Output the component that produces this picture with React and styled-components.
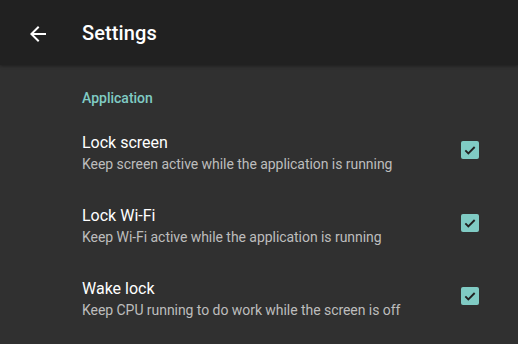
import styled, { createGlobalStyle } from 'styled-components';

const Global = createGlobalStyle`
  html, body { margin: 0; padding: 0; background: #303030; }
  body { font-family: Roboto, "Noto Sans", sans-serif; }
`;

const Page = styled.div`
  width: 518px;
  height: 344px;
  background: #303030;
  display: flex;
  flex-direction: column;
  overflow: hidden;
`;

const Toolbar = styled.div`
  height: 65px;
  flex-shrink: 0;
  background: #212121;
  display: flex;
  align-items: center;
  box-shadow: 0 1px 3px rgba(0, 0, 0, 0.4);
`;

const BackButton = styled.div`
  width: 82px;
  display: flex;
  align-items: center;
  padding-left: 26px;
  margin-top: 2px;
  box-sizing: border-box;
`;

const Title = styled.div`
  color: #fff;
  font-size: 20px;
  font-weight: 500;
  letter-spacing: 0.1px;
`;

const Category = styled.div`
  padding: 23px 0 8px 82px;
  line-height: 20px;
  font-size: 14px;
  font-weight: 500;
  color: #80cbc4;
`;

const Row = styled.div`
  display: flex;
  align-items: center;
  height: 73px;
  padding: 0 39px 0 82px;
`;

const Texts = styled.div`
  flex: 1;
  display: flex;
  flex-direction: column;
`;

const ItemTitle = styled.div`
  font-size: 16px;
  line-height: 22px;
  color: #fff;
`;

const ItemSummary = styled.div`
  font-size: 14px;
  line-height: 20px;
  color: #bdbdbd;
  letter-spacing: -0.05px;
`;

const Check = styled.div`
  width: 18px;
  height: 18px;
  margin-bottom: 6px;
  border-radius: 2px;
  background: #80cbc4;
  display: flex;
  align-items: center;
  justify-content: center;
`;

const items = [
  ['Lock screen', 'Keep screen active while the application is running'],
  ['Lock Wi-Fi', 'Keep Wi-Fi active while the application is running'],
  ['Wake lock', 'Keep CPU running to do work while the screen is off'],
];

export default function App() {
  return (
    <Page>
      <Global />
      <Toolbar>
        <BackButton>
          <svg width="24" height="24" viewBox="0 0 24 24">
            <path d="M20 11H7.83l5.59-5.59L12 4l-8 8 8 8 1.41-1.41L7.83 13H20v-2z" fill="#fff" />
          </svg>
        </BackButton>
        <Title>Settings</Title>
      </Toolbar>
      <Category>Application</Category>
      {items.map(([t, s]) => (
        <Row key={t}>
          <Texts>
            <ItemTitle>{t}</ItemTitle>
            <ItemSummary>{s}</ItemSummary>
          </Texts>
          <Check>
            <svg width="16" height="16" viewBox="0 0 24 24">
              <path d="M5 12.5l4.5 4.5L19 7.5" stroke="#212121" strokeWidth="2.8" fill="none" />
            </svg>
          </Check>
        </Row>
      ))}
    </Page>
  );
}
